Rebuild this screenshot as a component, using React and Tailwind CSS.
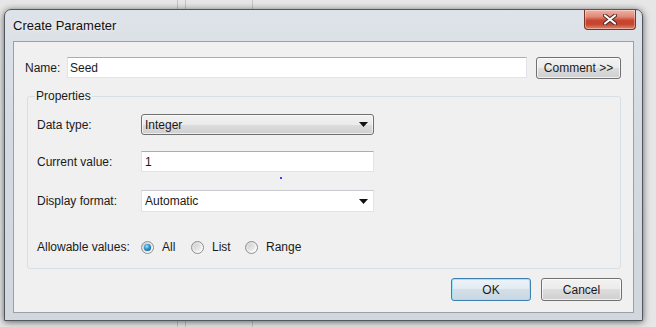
import React from "react";

function Arrow() {
  return (
    <svg width="9" height="5" viewBox="0 0 9 5" className="mr-[5px]">
      <path d="M0 0 H9 L4.5 5 Z" fill="#111" />
    </svg>
  );
}

function Radio({ checked, label, w }) {
  return (
    <div className={`flex items-center ${w}`}>
      <div className="flex h-[13px] w-[13px] items-center justify-center rounded-full border border-[#8e8f8f] bg-[linear-gradient(135deg,#d2d2d2,#f6f6f6_70%,#ffffff)]">
        {checked ? (
          <div className="h-[7px] w-[7px] rounded-full bg-[radial-gradient(circle_at_40%_35%,#a7e1fb,#2a8fd0_45%,#0a4f82_100%)] shadow-[0_0_1px_#1d5f8f]" />
        ) : (
          <div className="h-[7px] w-[7px] rounded-full bg-[linear-gradient(135deg,#cfcfcf,#f3f3f3)]" />
        )}
      </div>
      <span className="ml-[8px]">{label}</span>
    </div>
  );
}

export default function App() {
  return (
    <div className="relative h-[327px] w-[656px] overflow-hidden bg-[#e6e6e6] text-[12px] leading-[14px] text-[#1a1a1a] [font-family:'Liberation_Sans',Arial,sans-serif]">
      <div className="absolute left-[177px] top-0 h-full w-px bg-[#c4c4c4]" />
      <div className="absolute left-[185px] top-0 h-full w-px bg-[#c4c4c4]" />
      <div className="absolute left-[252px] top-0 h-full w-px bg-[#c4c4c4]" />

      <div className="relative ml-[4px] mt-[9px] flex h-[312px] w-[639px] flex-col rounded-t-[7px] border border-[#51575e] bg-[linear-gradient(180deg,#dee3e9,#d5dae1_40%,#d2d7de)] px-[8px] pb-[7px] shadow-[0_1px_7px_rgba(0,0,0,0.6)]">
        {/* Title bar */}
        <div className="flex h-[31px] items-start justify-between">
          <span className="mt-[8px] text-[13px] leading-[15px] text-[#111] [text-shadow:0_0_6px_#fff]">
            Create Parameter
          </span>
          <div className="mr-[-2px] flex h-[20px] w-[52px] items-center justify-center rounded-b-[4px] border border-t-0 border-[#7a3326] bg-[linear-gradient(180deg,#eeb3a6,#e08a77_35%,#c9452f_55%,#c5452f_75%,#e0876f)] shadow-[inset_0_0_0_1px_rgba(255,255,255,0.35)]">
            <svg width="14" height="11" viewBox="0 0 14 11">
              <path d="M2 1.5 L12 9.5 M12 1.5 L2 9.5" stroke="#4a2620" strokeWidth="4" strokeLinecap="round" />
              <path d="M2 1.5 L12 9.5 M12 1.5 L2 9.5" stroke="#ffffff" strokeWidth="2.2" strokeLinecap="round" />
            </svg>
          </div>
        </div>

        {/* Client area */}
        <div className="flex flex-1 flex-col border border-[#98a0aa] bg-[#f0f0f0]">
          {/* Name row */}
          <div className="mt-[15px] flex h-[22px] items-start pl-[11px] pr-[12px]">
            <span className="mt-[4px] w-[42px]">Name:</span>
            <div className="flex h-[21px] w-[460px] items-center border border-[#e2e3ea] border-t-[#abadb3] bg-white pl-[2px]">
              Seed
            </div>
            <div className="ml-[9px] flex h-[22px] w-[85px] items-center justify-center rounded-[3px] border border-[#707070] bg-[linear-gradient(180deg,#f2f2f2,#ebebeb_50%,#dddddd_50%,#cfcfcf)] shadow-[inset_0_0_0_1px_rgba(255,255,255,0.7)]">
              Comment &gt;&gt;
            </div>
          </div>

          {/* Properties group */}
          <div className="relative ml-[13px] mr-[12px] mt-[17px] flex h-[173px] flex-col rounded-[3px] border border-[#d5dfe5] pl-[9px] pt-[17px]">
            <span className="absolute left-[7px] top-[-8px] bg-[#f0f0f0] px-[1px]">Properties</span>

            <div className="flex h-[21px] items-center">
              <span className="w-[104px]">Data type:</span>
              <div className="flex h-[21px] w-[233px] items-center justify-between rounded-[3px] border border-[#707070] bg-[linear-gradient(180deg,#f2f2f2,#ebebeb_50%,#dddddd_50%,#cfcfcf)] pl-[3px] shadow-[inset_0_0_0_1px_rgba(255,255,255,0.6)]">
                <span>Integer</span>
                <Arrow />
              </div>
            </div>

            <div className="mt-[16px] flex h-[21px] items-center">
              <span className="w-[104px]">Current value:</span>
              <div className="flex h-[21px] w-[233px] items-center border border-[#e2e3ea] border-t-[#abadb3] bg-white pl-[3px]">
                1
              </div>
            </div>

            <div className="h-[18px] pl-[243px] pt-[5px]">
              <div className="h-[2px] w-[2px] bg-[#3c3cff]" />
            </div>

            <div className="flex h-[22px] items-center">
              <span className="w-[104px]">Display format:</span>
              <div className="flex h-[22px] w-[233px] items-center justify-between border border-[#e2e3ea] border-t-[#c9cbd0] bg-white pl-[3px]">
                <span>Automatic</span>
                <Arrow />
              </div>
            </div>

            <div className="mt-[28px] flex h-[14px] items-center">
              <span className="w-[104px]">Allowable values:</span>
              <Radio checked label="All" w="w-[50px]" />
              <Radio label="List" w="w-[54px]" />
              <Radio label="Range" w="w-[70px]" />
            </div>
          </div>

          {/* Buttons */}
          <div className="mt-[9px] flex justify-end pr-[11px]">
            <div className="flex h-[23px] w-[80px] items-center justify-center rounded-[3px] border border-[#3c7fb1] bg-[linear-gradient(180deg,#edf3f7,#e3ebf1_50%,#d3dfe8_50%,#c9d7e2)] shadow-[inset_0_0_0_1px_#9fe3fb]">
              OK
            </div>
            <div className="ml-[10px] flex h-[23px] w-[81px] items-center justify-center rounded-[3px] border border-[#707070] bg-[linear-gradient(180deg,#f2f2f2,#ebebeb_50%,#dddddd_50%,#cfcfcf)] shadow-[inset_0_0_0_1px_rgba(255,255,255,0.7)]">
              Cancel
            </div>
          </div>
        </div>
      </div>
    </div>
  );
}
